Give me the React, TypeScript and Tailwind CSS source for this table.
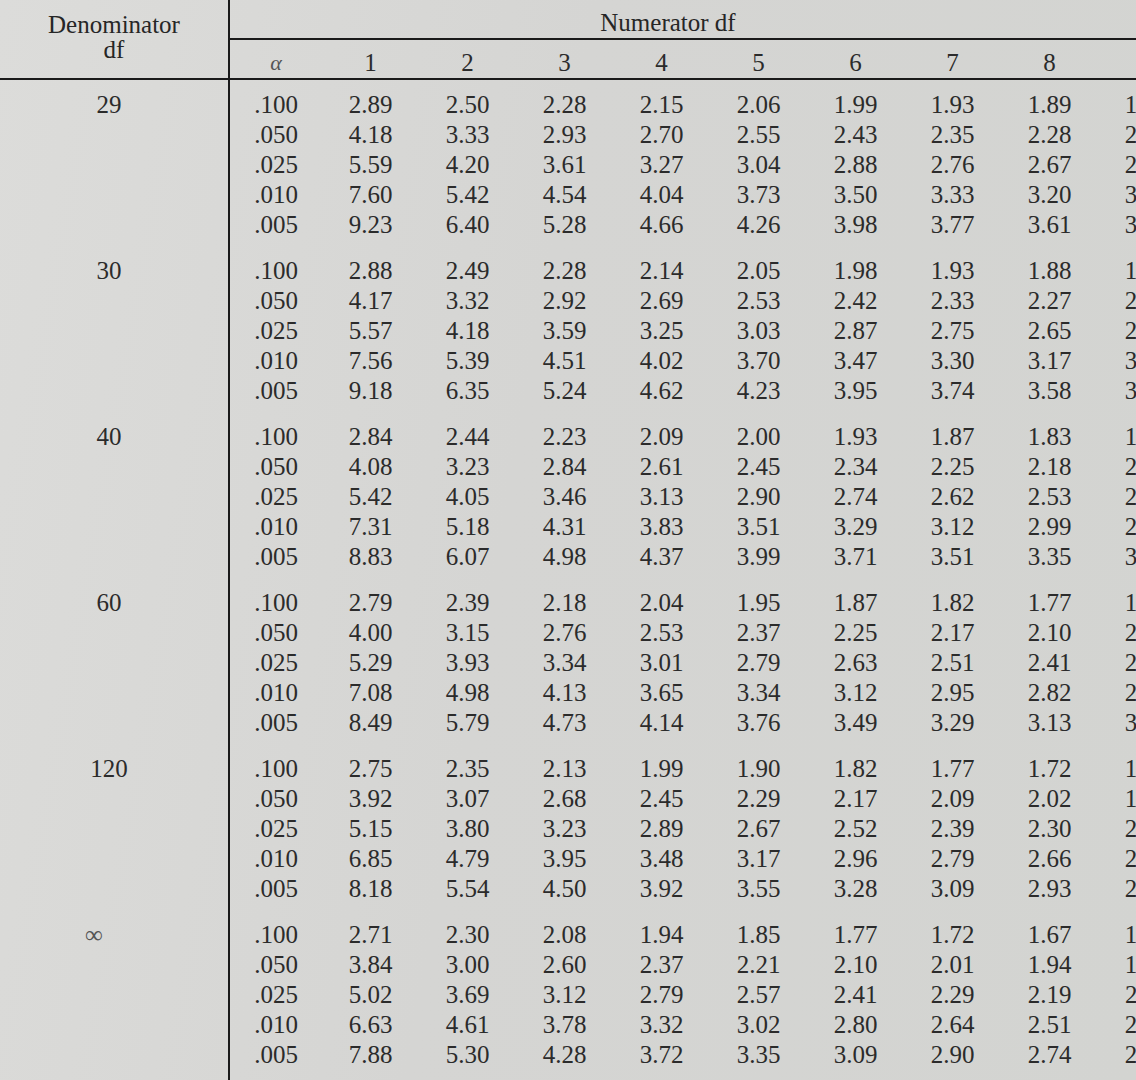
const alphas = ['.100', '.050', '.025', '.010', '.005'];

const groups: { df: string; rows: string[][] }[] = [
  {
    df: '29',
    rows: [
      ['2.89', '2.50', '2.28', '2.15', '2.06', '1.99', '1.93', '1.89', '1.86'],
      ['4.18', '3.33', '2.93', '2.70', '2.55', '2.43', '2.35', '2.28', '2.22'],
      ['5.59', '4.20', '3.61', '3.27', '3.04', '2.88', '2.76', '2.67', '2.59'],
      ['7.60', '5.42', '4.54', '4.04', '3.73', '3.50', '3.33', '3.20', '3.09'],
      ['9.23', '6.40', '5.28', '4.66', '4.26', '3.98', '3.77', '3.61', '3.48'],
    ],
  },
  {
    df: '30',
    rows: [
      ['2.88', '2.49', '2.28', '2.14', '2.05', '1.98', '1.93', '1.88', '1.85'],
      ['4.17', '3.32', '2.92', '2.69', '2.53', '2.42', '2.33', '2.27', '2.21'],
      ['5.57', '4.18', '3.59', '3.25', '3.03', '2.87', '2.75', '2.65', '2.57'],
      ['7.56', '5.39', '4.51', '4.02', '3.70', '3.47', '3.30', '3.17', '3.07'],
      ['9.18', '6.35', '5.24', '4.62', '4.23', '3.95', '3.74', '3.58', '3.45'],
    ],
  },
  {
    df: '40',
    rows: [
      ['2.84', '2.44', '2.23', '2.09', '2.00', '1.93', '1.87', '1.83', '1.79'],
      ['4.08', '3.23', '2.84', '2.61', '2.45', '2.34', '2.25', '2.18', '2.12'],
      ['5.42', '4.05', '3.46', '3.13', '2.90', '2.74', '2.62', '2.53', '2.45'],
      ['7.31', '5.18', '4.31', '3.83', '3.51', '3.29', '3.12', '2.99', '2.89'],
      ['8.83', '6.07', '4.98', '4.37', '3.99', '3.71', '3.51', '3.35', '3.22'],
    ],
  },
  {
    df: '60',
    rows: [
      ['2.79', '2.39', '2.18', '2.04', '1.95', '1.87', '1.82', '1.77', '1.74'],
      ['4.00', '3.15', '2.76', '2.53', '2.37', '2.25', '2.17', '2.10', '2.04'],
      ['5.29', '3.93', '3.34', '3.01', '2.79', '2.63', '2.51', '2.41', '2.33'],
      ['7.08', '4.98', '4.13', '3.65', '3.34', '3.12', '2.95', '2.82', '2.72'],
      ['8.49', '5.79', '4.73', '4.14', '3.76', '3.49', '3.29', '3.13', '3.01'],
    ],
  },
  {
    df: '120',
    rows: [
      ['2.75', '2.35', '2.13', '1.99', '1.90', '1.82', '1.77', '1.72', '1.68'],
      ['3.92', '3.07', '2.68', '2.45', '2.29', '2.17', '2.09', '2.02', '1.96'],
      ['5.15', '3.80', '3.23', '2.89', '2.67', '2.52', '2.39', '2.30', '2.22'],
      ['6.85', '4.79', '3.95', '3.48', '3.17', '2.96', '2.79', '2.66', '2.56'],
      ['8.18', '5.54', '4.50', '3.92', '3.55', '3.28', '3.09', '2.93', '2.81'],
    ],
  },
  {
    df: '∞',
    rows: [
      ['2.71', '2.30', '2.08', '1.94', '1.85', '1.77', '1.72', '1.67', '1.63'],
      ['3.84', '3.00', '2.60', '2.37', '2.21', '2.10', '2.01', '1.94', '1.88'],
      ['5.02', '3.69', '3.12', '2.79', '2.57', '2.41', '2.29', '2.19', '2.11'],
      ['6.63', '4.61', '3.78', '3.32', '3.02', '2.80', '2.64', '2.51', '2.41'],
      ['7.88', '5.30', '4.28', '3.72', '3.35', '3.09', '2.90', '2.74', '2.62'],
    ],
  },
];

// column 9 runs off the right edge; its header is not visible in the photo
const numerators = ['1', '2', '3', '4', '5', '6', '7', '8'];

export default function App() {
  return (
    <div className="w-[1136px] h-[1080px] overflow-hidden bg-[linear-gradient(100deg,#dcdcda_0%,#d5d5d3_45%,#d3d4d1_100%)] text-[#2b2b2b] font-['Liberation_Serif',serif] text-[25px]">
      {/* Header */}
      <div className="flex border-b-2 border-[#1a1a1a] h-[80px]">
        <div className="w-[230px] shrink-0 border-r-2 border-[#1a1a1a] pt-[12px] text-center leading-[25px] text-[#262626]">
          <div>Denominator</div>
          <div>df</div>
        </div>
        <div className="flex-1 min-w-0 flex flex-col">
          <div className="h-[40px] border-b-2 border-[#1a1a1a] pt-[10px] leading-[26px] text-center text-[#262626] pr-[30px]">
            Numerator df
          </div>
          <div className="grid grid-cols-[92px_repeat(9,97px)] pt-[10px] leading-[26px] text-center">
            <div className="italic text-[22px] text-[#555]">α</div>
            {numerators.map((n) => (
              <div key={n}>{n}</div>
            ))}
          </div>
        </div>
      </div>

      {/* Body */}
      <div className="flex h-[1000px]">
        <div className="w-[230px] shrink-0 border-r-2 border-[#1a1a1a] pt-[10px] flex flex-col gap-[16px]">
          {groups.map((g) => (
            <div key={g.df} className="h-[150px] text-center leading-[30px] pr-[10px]">
              {g.df === '∞' ? <span className="text-[#555] pr-[30px]">∞</span> : g.df}
            </div>
          ))}
        </div>
        <div className="flex-1 min-w-0 pt-[10px] flex flex-col gap-[16px]">
          {groups.map((g) => (
            <div key={g.df} className="flex flex-col">
              {g.rows.map((row, i) => (
                <div key={alphas[i]} className="grid grid-cols-[92px_repeat(9,97px)] h-[30px] leading-[30px] text-center">
                  <div>{alphas[i]}</div>
                  {row.map((v, j) => (
                    <div key={j}>{v}</div>
                  ))}
                </div>
              ))}
            </div>
          ))}
        </div>
      </div>
    </div>
  );
}
